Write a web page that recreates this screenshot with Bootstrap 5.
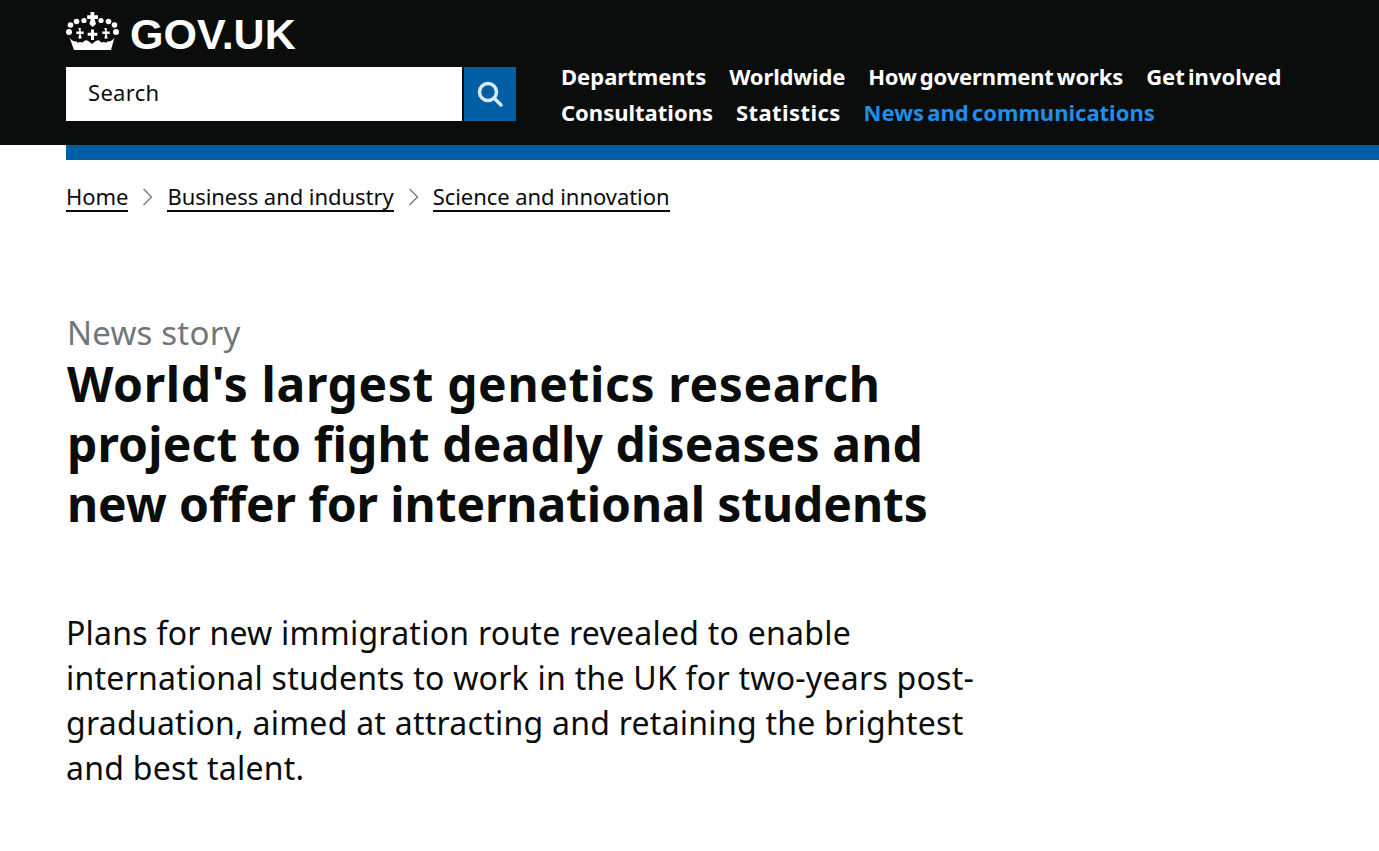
<!DOCTYPE html>
<html lang="en">
<head>
  <meta charset="UTF-8" />
  <meta name="viewport" content="width=device-width, initial-scale=1" />
  <title>World's largest genetics research project - GOV.UK</title>
  <link href="https://cdn.jsdelivr.net/npm/bootstrap@5.3.0/dist/css/bootstrap.min.css" rel="stylesheet" />
  <style>
    body {
      font-family: "Noto Sans", "Liberation Sans", sans-serif;
      color: #0b0c0c;
      background: #fff;
    }
    .site-head {
      background: #0b0c0c;
      height: 145px;
      padding: 12px 0 0 66px;
    }
    .logo-link {
      color: #fff;
      font-family: "Liberation Sans", Arial, sans-serif;
      font-weight: 700;
      font-size: 43px;
      line-height: 44px;
      height: 44px;
      text-decoration: none;
    }
    .crown { width: 53px; height: 38px; margin-right: 11px; }
    .search-box { width: 450px; height: 54px; margin-top: 11px; }
    .search-field {
      width: 396px;
      background: #fff;
      padding-left: 22px;
      font-size: 22px;
      line-height: 50px;
      letter-spacing: .3px;
    }
    .search-btn {
      width: 52px;
      margin-left: 2px;
      background: #005ea5;
      border: 0;
      padding: 0;
    }
    .main-nav { margin: 2px 0 0 45px; width: 760px; }
    .main-nav a {
      color: #fff;
      font-weight: 700;
      font-size: 22px;
      line-height: 36px;
      text-decoration: none;
      letter-spacing: 0;
      word-spacing: -2.5px;
      margin-right: 23px;
    }
    .main-nav a.tight-link { letter-spacing: -.15px; }
    .main-nav a.wide-link { letter-spacing: .4px; }
    .main-nav a.active-link { color: #1d8feb; }
    .blue-bar { height: 15px; margin-left: 66px; background: #005ea5; }
    .page-wrap { padding-left: 67px; }
    .crumbs { margin: 22px 0 0 -1px; font-size: 22px; line-height: 28px; }
    .crumbs a {
      color: #0b0c0c;
      text-decoration: none;
      border-bottom: 2px solid #0b0c0c;
      letter-spacing: -.05px;
    }
    .crumb-sep { width: 39px; text-align: center; line-height: 0; }
    .story-kind { margin: 101px 0 0; font-size: 33px; line-height: 40px; letter-spacing: .2px; color: #6f777b; }
    .story-title {
      margin: 1px 0 0;
      width: 900px;
      font-weight: 700;
      font-size: 48px;
      line-height: 60px;
    }
    .story-title span { display: block; }
    .title-line-a { letter-spacing: .64px; }
    .title-line-b { letter-spacing: .14px; }
    .title-line-c { letter-spacing: -.1px; }
    .story-lead {
      margin: 76px 0 0 -1px;
      width: 920px;
      font-size: 32px;
      line-height: 45px;
      letter-spacing: .25px;
    }
  </style>
</head>
<body>
  <header class="site-head">
    <a href="#" class="logo-link d-flex align-items-center">
      <svg class="crown align-self-start" viewBox="0 0 53 38" fill="#fff">
        <path d="M24.500 0h3.800v3.300h3.700v3.600h-3.400l1.400 5-3.300 3.100-3.300-3.100 1.400-5h-3.600V3.300h3.300z"/>
        <circle cx="18" cy="8.500" r="2.600"/><circle cx="35" cy="8.500" r="2.600"/>
        <circle cx="10.500" cy="9.500" r="2.800"/><circle cx="42.500" cy="9.500" r="2.800"/>
        <circle cx="4.500" cy="13" r="2.800"/><circle cx="48.500" cy="13" r="2.800"/>
        <circle cx="3" cy="20" r="3"/><circle cx="50" cy="20" r="3"/>
        <path d="M25 17.500h3v3.300h3.300v3H28V28h-3v-4.200h-3.300v-3H25z"/>
        <path d="M12.300 16h2.400v3.500h3v2.600h-3l1 4.400h-3.400l1-4.400h-3v-2.600h3z"/>
        <path d="M38.300 16h2.400v3.500h3v2.600h-3l1 4.400h-3.400l1-4.400h-3v-2.600h3z"/>
        <path d="M3.500 25.500c2 3 5 4.500 7 3.800l1 1.400c2-.8 4-.8 5 0 1-1.700 3-2.700 4.500-2.200 1.500.5 3 1.700 5 3.500 2-1.800 3.500-3 5-3.500 1.500-.5 3.500.5 4.500 2.200 1-.8 3-.8 5 0l1-1.400c2 .7 5-.8 7-3.800L45 38H8z"/>
      </svg>
      GOV.UK
    </a>
    <div class="d-flex align-items-start">
      <div class="search-box d-flex">
        <div class="search-field">Search</div>
        <button class="search-btn d-flex align-items-center justify-content-center" type="button" aria-label="Search">
          <svg width="28" height="28" viewBox="0 0 28 28" fill="none" stroke="#d8e8f4" stroke-width="3.500">
            <circle cx="12" cy="12" r="8.500"/><path d="M18 18l7 7" stroke-linecap="round"/>
          </svg>
        </button>
      </div>
      <nav class="main-nav">
        <div class="d-flex flex-wrap">
          <a href="#">Departments</a><a href="#" class="tight-link">Worldwide</a><a href="#" class="tight-link">How government works</a><a href="#">Get involved</a>
          <a href="#">Consultations</a><a href="#" class="wide-link">Statistics</a><a href="#" class="active-link">News and communications</a>
        </div>
      </nav>
    </div>
  </header>
  <div class="blue-bar"></div>
  <main class="page-wrap">
    <div class="crumbs d-flex align-items-center">
      <a href="#">Home</a>
      <span class="crumb-sep"><svg width="11" height="18" viewBox="0 0 11 18" fill="none" stroke="#6f777b" stroke-width="1.300"><path d="M1.500 1l8 8-8 8"/></svg></span>
      <a href="#">Business and industry</a>
      <span class="crumb-sep"><svg width="11" height="18" viewBox="0 0 11 18" fill="none" stroke="#6f777b" stroke-width="1.300"><path d="M1.500 1l8 8-8 8"/></svg></span>
      <a href="#">Science and innovation</a>
    </div>
    <p class="story-kind">News story</p>
    <h1 class="story-title"><span class="title-line-a">World's largest genetics research</span> <span class="title-line-b">project to fight deadly diseases and</span> <span class="title-line-c">new offer for international students</span></h1>
    <p class="story-lead">Plans for new immigration route revealed to enable international students to work in the UK for two-years post-graduation, aimed at attracting and retaining the brightest and best talent.</p>
  </main>
  <script src="https://cdn.jsdelivr.net/npm/bootstrap@5.3.0/dist/js/bootstrap.bundle.min.js"></script>
</body>
</html>
